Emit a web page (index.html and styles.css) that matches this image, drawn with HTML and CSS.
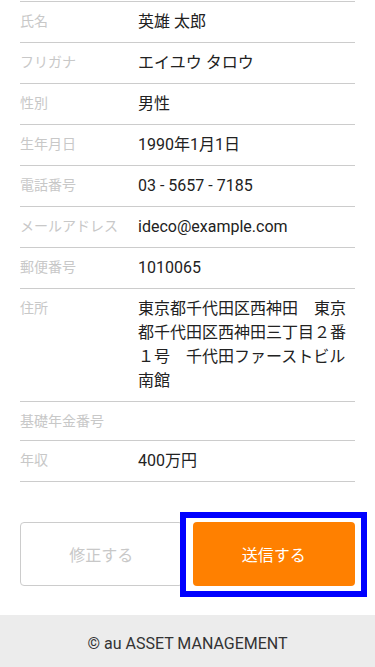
FILE: index.html
```html
<!DOCTYPE html>
<html lang="ja">
<head>
<meta charset="utf-8">
<meta name="viewport" content="width=device-width, initial-scale=1">
<title>確認</title>
<link rel="stylesheet" href="styles.css">
</head>
<body>
<main class="page">
  <dl class="info">
    <div class="row"><dt class="label">氏名</dt><dd class="value">英雄 太郎</dd></div>
    <div class="row"><dt class="label">フリガナ</dt><dd class="value">エイユウ タロウ</dd></div>
    <div class="row"><dt class="label">性別</dt><dd class="value">男性</dd></div>
    <div class="row"><dt class="label">生年月日</dt><dd class="value">1990年1月1日</dd></div>
    <div class="row"><dt class="label">電話番号</dt><dd class="value">03 - 5657 - 7185</dd></div>
    <div class="row"><dt class="label">メールアドレス</dt><dd class="value">ideco@example.com</dd></div>
    <div class="row"><dt class="label">郵便番号</dt><dd class="value">1010065</dd></div>
    <div class="row"><dt class="label">住所</dt><dd class="value">東京都千代田区西神田　東京都千代田区西神田三丁目２番１号　千代田ファーストビル南館</dd></div>
    <div class="row"><dt class="label">基礎年金番号</dt><dd class="value"></dd></div>
    <div class="row"><dt class="label">年収</dt><dd class="value">400万円</dd></div>
  </dl>
  <div class="actions">
    <button type="button" class="btn btn-back">修正する</button>
    <div class="submit-wrap">
      <button type="button" class="btn btn-submit">送信する</button>
      <span class="focus-ring"></span>
    </div>
  </div>
</main>
<footer class="footer">© au ASSET MANAGEMENT</footer>
</body>
</html>
```

FILE: styles.css
```css
* {
  box-sizing: border-box;
}

html, body {
  margin: 0;
  padding: 0;
  background: #ffffff;
}

body {
  font-family: Roboto, "Noto Sans CJK JP", sans-serif;
  color: #222222;
}

.page {
  padding: 1px 20px 29px;
}

.info {
  margin: 0;
}

.row {
  display: flex;
  border-top: 1px solid #cccccc;
  padding: 8px 0;
}

.row:last-child {
  border-bottom: 1px solid #cccccc;
}

.label {
  flex: 0 0 118px;
  margin: 0;
  font-size: 14px;
  line-height: 22px;
  color: #c8c8c8;
  white-space: nowrap;
}

.value {
  flex: 1;
  margin: 0;
  font-size: 16px;
  line-height: 24px;
  color: #222222;
  min-width: 0;
}

.actions {
  margin-top: 40px;
  display: grid;
  grid-template-columns: 1fr 1fr;
  gap: 10px;
}

.btn {
  display: block;
  width: 100%;
  height: 64px;
  border-radius: 4px;
  font-family: "Noto Sans CJK JP", sans-serif;
  font-size: 16px;
  cursor: pointer;
}

.btn-back {
  background: #ffffff;
  border: 1px solid #cccccc;
  color: #c8c8c8;
}

.submit-wrap {
  position: relative;
}

.btn-submit {
  background: #ff8000;
  border: none;
  color: #ffffff;
}

.focus-ring {
  position: absolute;
  left: -13px;
  right: -12px;
  top: -10px;
  bottom: -11px;
  border: 6px solid #0000ff;
  pointer-events: none;
}

.footer {
  height: 52px;
  padding-top: 5px;
  background: #ececec;
  display: flex;
  align-items: center;
  justify-content: center;
  font-size: 16px;
  color: #333333;
}
```
